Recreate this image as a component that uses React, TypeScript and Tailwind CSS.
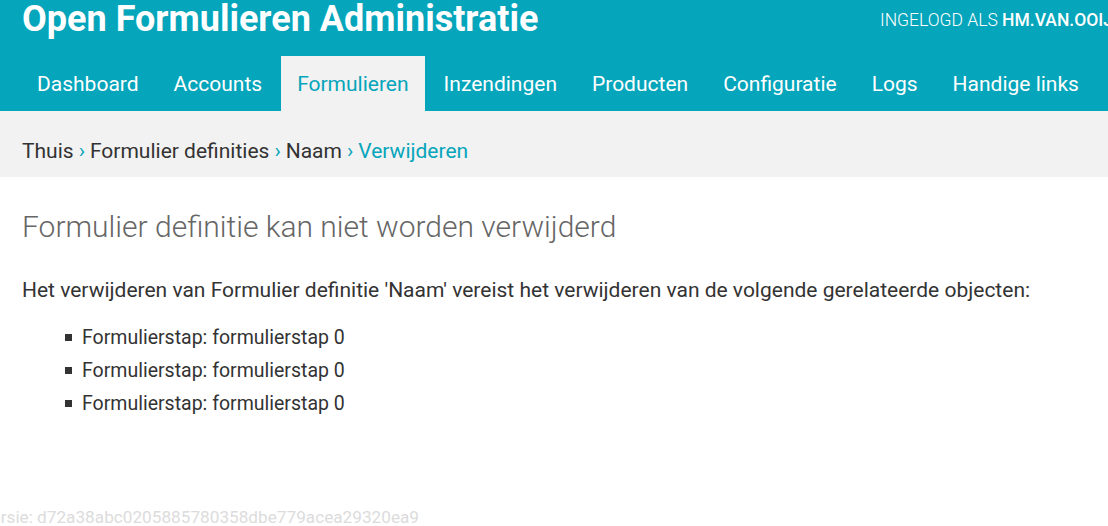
import React from "react";

const nav = ["Dashboard", "Accounts", "Formulieren", "Inzendingen", "Producten", "Configuratie", "Logs", "Handige links"];

function Sep() {
  return <span className="text-[#05a5bb] mx-[5px]">›</span>;
}

export default function App() {
  return (
    <div className="w-[1108px] h-[526px] overflow-hidden bg-white flex flex-col" style={{ fontFamily: "Roboto, 'Liberation Sans', sans-serif" }}>
      <header className="bg-[#05a5bb] h-[111px] shrink-0 flex flex-col">
        <div className="flex justify-between items-start h-[56px]">
          <h1 className="text-[36px] font-bold text-white leading-none pl-[22px] pt-[1px] whitespace-nowrap">Open Formulieren Administratie</h1>
          <div className="w-[228px] shrink-0 whitespace-nowrap text-[17.5px] font-light text-white pt-[7px]">
            INGELOGD ALS <span className="font-medium">HM.VAN.OOIJEN</span>
          </div>
        </div>
        <nav className="flex gap-[3px] pl-[21px] h-[55px]">
          {nav.map((n) => (
            <div
              key={n}
              className={
                "px-4 pt-[2px] flex items-center text-[21px] whitespace-nowrap " +
                (n === "Formulieren" ? "bg-[#f2f2f2] text-[#05a5bb]" : "text-white")
              }
            >
              {n}
            </div>
          ))}
        </nav>
      </header>
      <div className="bg-[#f2f2f2] h-[66px] shrink-0 flex items-center pt-[16px] pl-[22px] text-[21px] text-[#333] whitespace-pre">
        <span>Thuis</span>
        <Sep />
        <span>Formulier definities</span>
        <Sep />
        <span>Naam</span>
        <Sep />
        <span className="text-[#05a5bb]">Verwijderen</span>
      </div>
      <main className="pl-[22px] flex-1">
        <h2 className="text-[30px] font-light text-[#666] mt-[32px] leading-[36px]">Formulier definitie kan niet worden verwijderd</h2>
        <p className="text-[21px] text-[#333] mt-[32px] leading-[26px] whitespace-nowrap">
          Het verwijderen van Formulier definitie 'Naam' vereist het verwijderen van de volgende gerelateerde objecten:
        </p>
        <ul className="mt-[18px] pl-[43px] text-[19.5px] text-[#333]">
          {[0, 1, 2].map((i) => (
            <li key={i} className="flex items-center h-[33px]">
              <span className="w-[7px] h-[7px] bg-[#333] mr-[10px] inline-block" />
              Formulierstap: formulierstap 0
            </li>
          ))}
        </ul>
      </main>
      <div className="h-[18px] shrink-0 -ml-[19px] text-[17.2px] text-[#dcdcdc] leading-[18px] whitespace-nowrap">
        Versie: d72a38abc0205885780358dbe779acea29320ea9
      </div>
    </div>
  );
}
